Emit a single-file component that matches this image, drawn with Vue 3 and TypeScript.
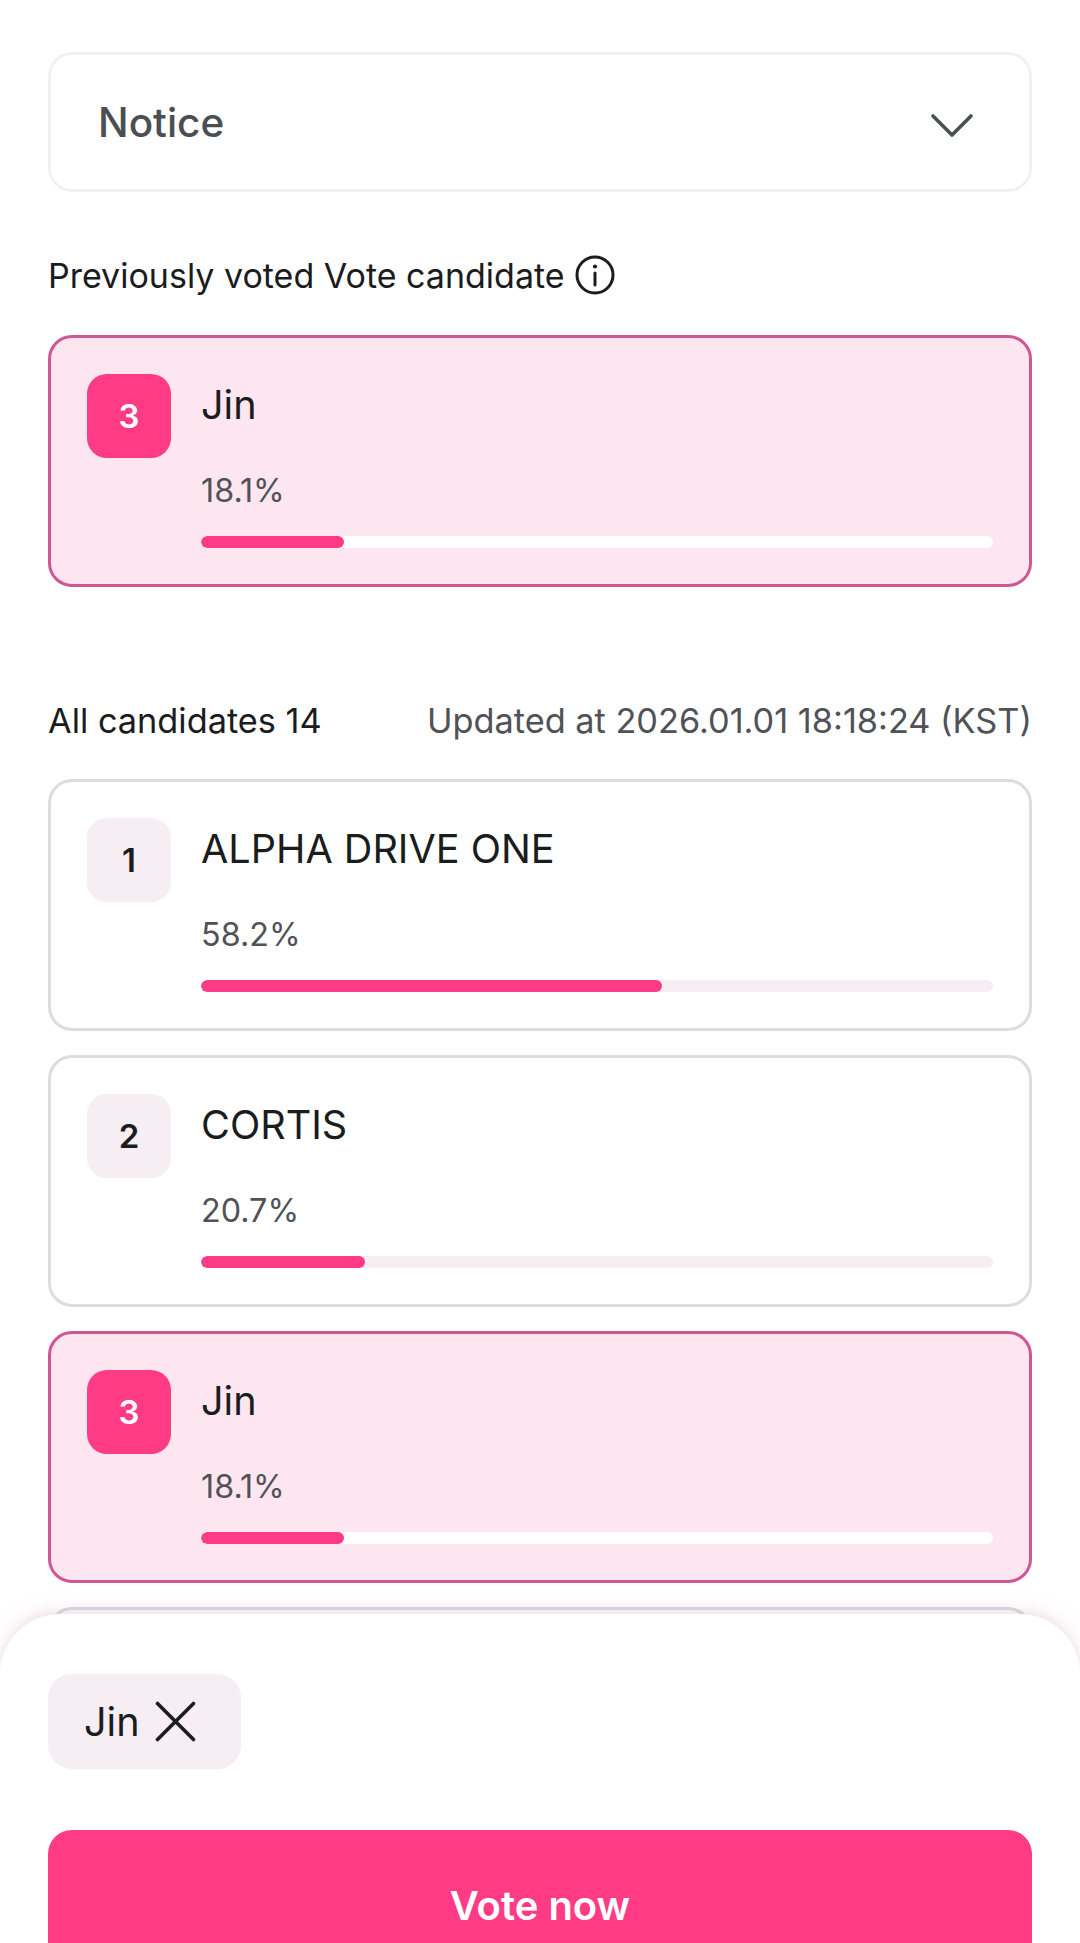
<script setup lang="ts">
interface Candidate {
  rank: number
  name: string
  percent: number
  selected: boolean
}

const previous: Candidate = { rank: 3, name: 'Jin', percent: 18.1, selected: true }
const candidates: Candidate[] = [
  { rank: 1, name: 'ALPHA DRIVE ONE', percent: 58.2, selected: false },
  { rank: 2, name: 'CORTIS', percent: 20.7, selected: false },
  previous,
  { rank: 4, name: '', percent: 0, selected: false },
]
</script>

<template>
  <div class="page">
    <main class="content">
      <button class="notice" type="button">
        <span>Notice</span>
        <svg class="chevron" viewBox="0 0 44 26" fill="none">
          <path d="M3 3 L22 22 L41 3" stroke="#4a4f52" stroke-width="3.6" stroke-linecap="round" stroke-linejoin="round" />
        </svg>
      </button>

      <h2 class="previous-label">
        Previously voted Vote candidate
        <svg class="info" viewBox="0 0 40 40" fill="none">
          <circle cx="20" cy="20" r="18" stroke="#1a1c1e" stroke-width="3" />
          <circle cx="20" cy="11.5" r="2.1" fill="#1a1c1e" />
          <path d="M20 18v12" stroke="#1a1c1e" stroke-width="3" stroke-linecap="round" />
        </svg>
      </h2>

      <article class="card selected">
        <div class="rank">{{ previous.rank }}</div>
        <div class="body">
          <div class="name">{{ previous.name }}</div>
          <div class="percent">{{ previous.percent }}%</div>
          <div class="track"><div class="fill" :style="{ width: previous.percent + '%' }"></div></div>
        </div>
      </article>

      <div class="list-head">
        <span class="all">All candidates 14</span>
        <span class="updated">Updated at 2026.01.01 18:18:24 (KST)</span>
      </div>

      <div class="list">
        <article v-for="c in candidates" :key="c.rank" class="card" :class="{ selected: c.selected }">
          <template v-if="c.name">
            <div class="rank">{{ c.rank }}</div>
            <div class="body">
              <div class="name">{{ c.name }}</div>
              <div class="percent">{{ c.percent }}%</div>
              <div class="track"><div class="fill" :style="{ width: c.percent + '%' }"></div></div>
            </div>
          </template>
        </article>
      </div>
    </main>

    <section class="sheet">
      <div class="chip">
        <span>Jin</span>
        <svg class="close" viewBox="0 0 41 41" fill="none">
          <path d="M2.5 2.5 L38.5 38.5 M38.5 2.5 L2.5 38.5" stroke="#1a1c1e" stroke-width="3.6" stroke-linecap="round" />
        </svg>
      </div>
      <button class="vote" type="button">Vote now</button>
    </section>
  </div>
</template>

<style scoped>
.page {
  position: relative;
  width: 1080px;
  height: 1943px;
  overflow: hidden;
  background: #fff;
  font-family: Inter, "Liberation Sans", sans-serif;
  color: #1a1c1e;
}
.content {
  padding: 52px 48px 0;
}
.notice {
  display: flex;
  align-items: center;
  justify-content: space-between;
  box-sizing: border-box;
  width: 100%;
  height: 140px;
  padding: 0 55px 0 47px;
  background: #fff;
  border: 3px solid #f5eff3;
  border-radius: 24px;
  font: 500 40.5px Inter, sans-serif;
  color: #4a4f52;
}
.chevron {
  width: 44px;
  height: 26px;
  margin-top: 7px;
}
.previous-label {
  display: flex;
  align-items: center;
  gap: 10px;
  height: 40px;
  margin: 63px 0 40px;
  font-size: 34px;
  font-weight: 400;
}
.info {
  width: 40px;
  height: 40px;
}
.card {
  display: flex;
  box-sizing: border-box;
  height: 252px;
  padding: 36px;
  background: #fff;
  border: 3px solid #dedce3;
  border-radius: 24px;
}
.card.selected {
  background: #fee6f0;
  border-color: #cf5794;
}
.rank {
  flex: none;
  display: flex;
  align-items: center;
  justify-content: center;
  width: 84px;
  height: 84px;
  border-radius: 20px;
  background: #f6eef2;
  font-size: 33px;
  font-weight: 600;
  color: #1a1c1e;
}
.selected .rank {
  background: #ff3b86;
  color: #fff;
}
.body {
  flex: 1;
  margin-left: 30px;
  min-width: 0;
}
.name {
  height: 44px;
  line-height: 44px;
  margin-top: 9px;
  font-size: 39.6px;
}
.percent {
  height: 36px;
  line-height: 36px;
  margin-top: 46px;
  font-size: 32.3px;
  color: #505257;
}
.track {
  height: 12px;
  margin-top: 27px;
  border-radius: 6px;
  background: #f6eef2;
  overflow: hidden;
}
.selected .track {
  background: #fff;
}
.fill {
  height: 100%;
  border-radius: 6px;
  background: #ff3b86;
}
.list-head {
  display: flex;
  justify-content: space-between;
  align-items: center;
  height: 40px;
  margin: 113px 0 39px;
  font-size: 34.3px;
}
.updated {
  color: #505257;
}
.list {
  display: flex;
  flex-direction: column;
  gap: 24px;
}
.sheet {
  position: absolute;
  left: 0;
  right: 0;
  top: 1614px;
  bottom: 0;
  padding: 60px 48px 0;
  background: #fff;
  border-radius: 60px 60px 0 0;
  box-shadow: 0 -2px 12px rgba(100, 90, 100, 0.14), 0 -8px 26px rgba(255, 59, 134, 0.05);
}
.chip {
  display: inline-flex;
  align-items: center;
  gap: 15px;
  box-sizing: border-box;
  height: 95px;
  padding: 0 45px 0 36px;
  background: #f6eef2;
  border-radius: 24px;
  font-size: 39.6px;
}
.close {
  width: 41px;
  height: 41px;
}
.vote {
  display: block;
  width: 100%;
  height: 150px;
  margin-top: 61px;
  padding: 0;
  border: 0;
  border-radius: 24px;
  background: #ff3b86;
  color: #fff;
  font: 600 40px Inter, sans-serif;
}
</style>
